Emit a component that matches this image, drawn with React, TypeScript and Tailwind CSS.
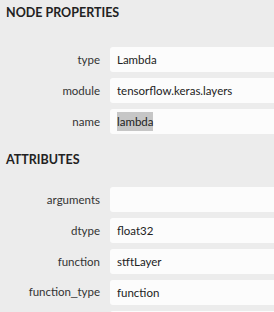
const nodeProps = [
  { label: 'type', value: 'Lambda' },
  { label: 'module', value: 'tensorflow.keras.layers' },
  { label: 'name', value: 'lambda', selected: true },
];

const attributes = [
  { label: 'arguments', value: '' },
  { label: 'dtype', value: 'float32' },
  { label: 'function', value: 'stftLayer' },
  { label: 'function_type', value: 'function' },
  { label: '', value: '' },
];

type Row = { label: string; value: string; selected?: boolean };

function Label({ text }: { text: string }) {
  // Lato's underscore is very wide, borrow a narrower one
  const parts = text.split('_');
  return (
    <>
      {parts.map((p, i) => (
        <span key={i}>
          {i > 0 && <span className="font-['Liberation_Sans',sans-serif]">_</span>}
          {p}
        </span>
      ))}
    </>
  );
}

function PropRow({ row }: { row: Row }) {
  return (
    <div className="flex items-center h-[25px]">
      <div className="w-[100px] shrink-0 text-right text-[11.5px] text-[#333] whitespace-nowrap">
        <Label text={row.label} />
      </div>
      <div className="ml-[10px] flex-1 h-full bg-[#fcfcfc] rounded-l-[3px] flex items-center pl-[7px] text-[11.5px] text-[#222] whitespace-nowrap">
        {row.selected ? <span className="bg-[#c6c6c6] py-[1px]">{row.value}</span> : row.value}
      </div>
    </div>
  );
}

export default function App() {
  return (
    <div className="w-[274px] h-[312px] overflow-hidden bg-[#ececec] font-['Lato',sans-serif]">
      <div className="pl-[6px] pt-[5px] text-[12.5px] font-bold text-[#222] leading-[16px]">NODE PROPERTIES</div>
      <div className="mt-[26px] flex flex-col gap-[6px]">
        {nodeProps.map((r, i) => (
          <PropRow key={i} row={r} />
        ))}
      </div>
      <div className="pl-[6px] mt-[18px] text-[12.5px] font-bold text-[#222] leading-[16px]">ATTRIBUTES</div>
      <div className="mt-[19px] flex flex-col gap-[6px]">
        {attributes.map((r, i) => (
          <PropRow key={i} row={r} />
        ))}
      </div>
    </div>
  );
}
